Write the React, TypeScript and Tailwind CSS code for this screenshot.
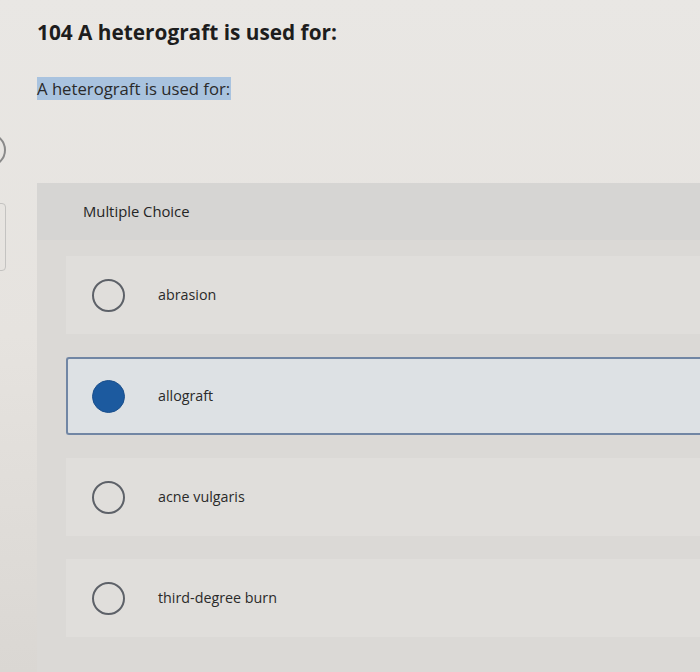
import React from "react";

const options = [
  { label: "abrasion", selected: false },
  { label: "allograft", selected: true },
  { label: "acne vulgaris", selected: false },
  { label: "third-degree burn", selected: false },
];

export default function App() {
  return (
    <div
      className="relative w-[700px] h-[672px] overflow-hidden bg-gradient-to-b from-[#e9e7e4] via-[#e6e3df] to-[#dad7d3] text-[#222]"
      style={{ fontFamily: "'Open Sans', 'Liberation Sans', sans-serif" }}
    >
      {/* partial sidebar pieces at left edge */}
      <div className="absolute left-[-30px] top-[133px] w-[36px] h-[34px] rounded-full border-2 border-[#8a8a8a]" />
      <div className="absolute left-[-20px] top-[203px] w-[26px] h-[68px] rounded-[4px] border border-[#c4c3c1]" />

      <div className="pl-[37px] pt-[18px]">
        <h1 className="text-[20.8px] font-bold leading-[28px] text-[#1d1d1d]">
          104 A heterograft is used for:
        </h1>
        <div className="mt-[31px]">
          <span className="bg-[#a9c3df] text-[16.7px] leading-[22px] text-[#2a2a2a] pr-[1px]">
            A heterograft is used for:
          </span>
        </div>
      </div>

      <div className="absolute left-[37px] right-0 top-[183px] bottom-0 bg-[#dbd9d6]">
        <div className="h-[57px] bg-[#d6d5d3] flex items-center pl-[46px] text-[14.8px] text-[#252525]">
          Multiple Choice
        </div>
        <div className="pl-[29px] pt-[16px] flex flex-col gap-[23px]">
          {options.map((o) => (
            <div
              key={o.label}
              className={
                o.selected
                  ? "h-[78px] flex items-center border-2 border-r-0 border-[#7186a4] rounded-l-[3px] bg-[#dde1e4]"
                  : "h-[78px] flex items-center border-2 border-transparent bg-[#e0dedb]"
              }
            >
              <div className="w-[24px]" />
              {o.selected ? (
                <div className="w-[33px] h-[33px] rounded-full bg-[#1c5a9f] border border-[#1a4f8c]" />
              ) : (
                <div className="w-[33px] h-[33px] rounded-full border-2 border-[#5d6168]" />
              )}
              <div className="ml-[33px] text-[14.3px] text-[#2a2a2a]">{o.label}</div>
            </div>
          ))}
        </div>
      </div>
    </div>
  );
}
